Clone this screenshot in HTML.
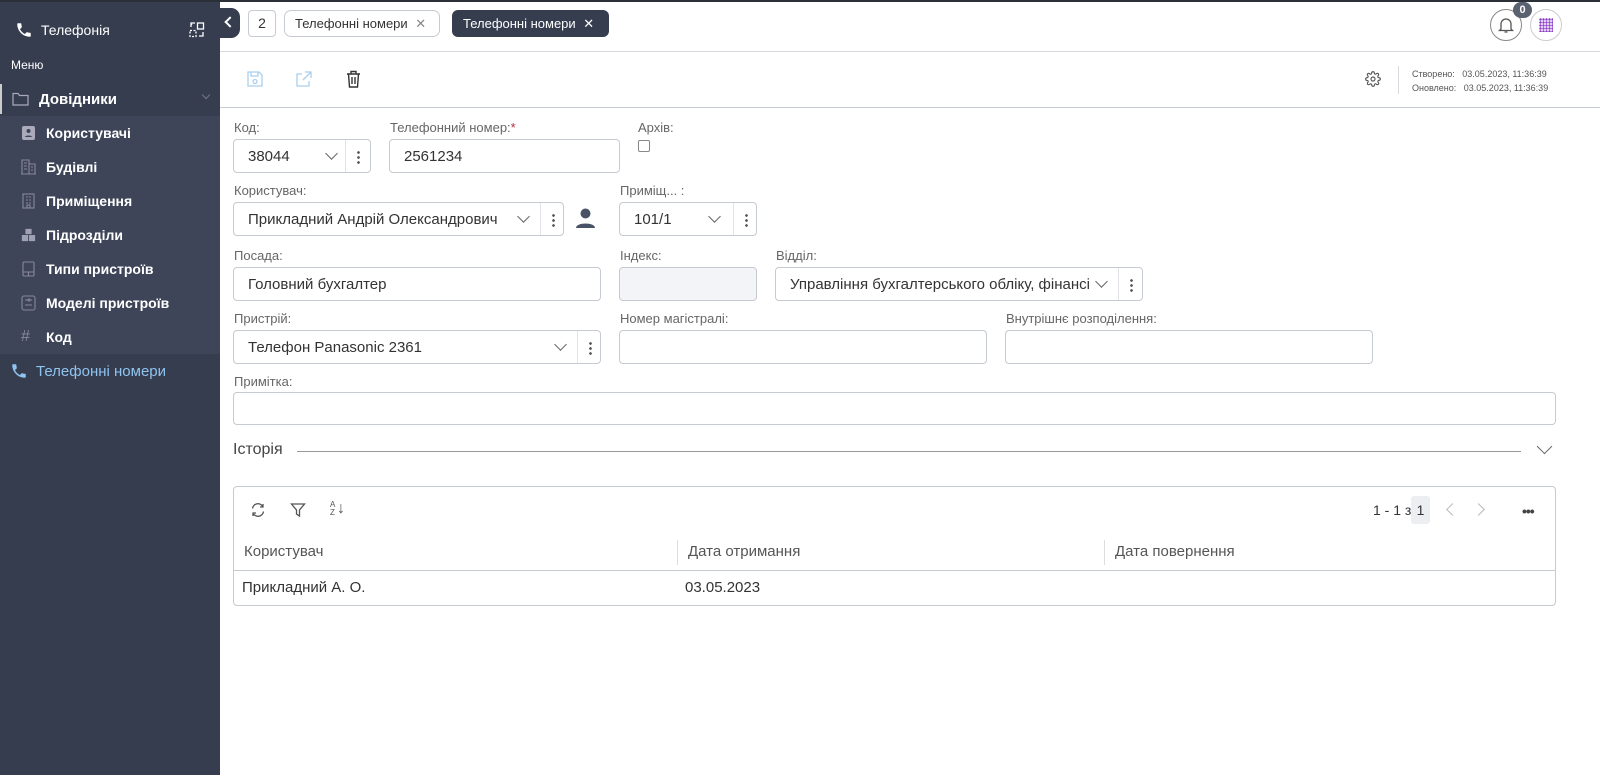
<!DOCTYPE html>
<html><head><meta charset="utf-8"><style>
*{box-sizing:border-box;margin:0;padding:0}
body{width:1600px;height:775px;overflow:hidden;background:#fff;font-family:"Liberation Sans",sans-serif;position:relative;color:#333}
.a{position:absolute}
#sb{left:0;top:0;width:220px;height:775px;background:#363d4f}
.topline{left:0;top:0;width:1600px;height:2px;background:#2b2f38}
.mi{position:absolute;left:0;width:220px;height:34px;color:#fff;font-size:14px;font-weight:bold;display:flex;align-items:center}
.mi svg{margin-left:21px;margin-right:10px}
.lbl{position:absolute;font-size:13px;color:#666}
.inp{position:absolute;border:1px solid #c6cad1;border-radius:4px;height:34px;font-size:15px;color:#333;display:flex;align-items:center;padding-left:14px;background:#fff;white-space:nowrap}
.dv{position:absolute;top:0;bottom:0;border-left:1px solid #e0e3e8;width:24px}
.dots{position:absolute;top:10px;left:11px;width:3px;height:14px;background:radial-gradient(circle,#555 1.2px,transparent 1.5px) 0 0/3px 5px repeat-y}
.chev{position:absolute;top:11px;width:9px;height:9px;border-right:1.3px solid #666;border-bottom:1.3px solid #666;transform:rotate(45deg)}
.th{position:absolute;top:543px;font-size:15px;color:#555}
</style></head><body>
<div class="a" id="sb"></div>
<div class="a topline"></div>
<svg class="a" style="left:15px;top:21px" width="18" height="18" viewBox="0 0 24 24"><path fill="#fff" d="M6.6 10.8c1.4 2.8 3.8 5.1 6.6 6.6l2.2-2.2c.3-.3.7-.4 1-.2 1.1.4 2.3.6 3.6.6.6 0 1 .4 1 1V20c0 .6-.4 1-1 1C10.6 21 3 13.4 3 4c0-.6.4-1 1-1h3.5c.6 0 1 .4 1 1 0 1.3.2 2.5.6 3.6.1.3 0 .7-.2 1L6.6 10.8z"/></svg>
<div class="a" style="left:41px;top:22px;color:#fff;font-size:14px">Телефонія</div>
<svg class="a" style="left:189px;top:22px" width="16" height="16" viewBox="0 0 16 16" fill="none" stroke="#fff" stroke-width="1.3"><rect x="8.5" y="1" width="6" height="6"/><path d="M1 8.5h6v6H1z" stroke-dasharray="2 1.5"/><path d="M6 1H2v4M3 3l-1-1M14 10v4h-4"/></svg>
<div class="a" style="left:11px;top:58px;color:#fff;font-size:12px">Меню</div>
<div class="mi" style="top:82px;font-weight:bold;font-size:15px;background:#363d4f"><svg style="margin-left:12px" width="17" height="14" viewBox="0 0 17 14" fill="none" stroke="#aab" stroke-width="1.2"><path d="M1 1.5h5l1.5 2H16v9.5H1z"/></svg>Довідники</div>
<div class="a chev" style="left:203px;top:92px;width:6px;height:6px;border-color:#778"></div>
<div class="a" style="left:0;top:84px;width:2px;height:30px;background:#ccc"></div>
<div class="a" style="left:0;top:116px;width:220px;height:238px;background:#3e4559"></div>
<div class="mi" style="top:116px"><svg width="15" height="16" viewBox="0 0 15 16"><rect x="1" y="1" width="13" height="14" rx="2" fill="#aab"/><circle cx="7.5" cy="6" r="2" fill="#3e4559"/><path d="M4 12c0-2 7-2 7 0z" fill="#3e4559"/></svg>Користувачі</div>
<div class="mi" style="top:150px"><svg width="15" height="16" viewBox="0 0 15 16" fill="none" stroke="#889" stroke-width="1.1"><path d="M1 15V1h7v14M8 5h6v10M3 4h3M3 7h3M3 10h3M10 8h2M10 11h2M0 15h15"/></svg>Будівлі</div>
<div class="mi" style="top:184px"><svg width="15" height="16" viewBox="0 0 15 16" fill="none" stroke="#889" stroke-width="1.1"><rect x="2" y="1" width="11" height="14"/><path d="M5 4h2M8 4h2M5 7h2M8 7h2M5 10h2M8 10h2M6 15v-3h3v3"/></svg>Приміщення</div>
<div class="mi" style="top:218px"><svg width="15" height="16" viewBox="0 0 17 16" fill="#aab"><path d="M5 1h7v6H5zM1 8h7v7H1zM9 8h7v7H9z" opacity=".9"/></svg>Підрозділи</div>
<div class="mi" style="top:252px"><svg width="15" height="16" viewBox="0 0 15 16" fill="none" stroke="#889" stroke-width="1.1"><rect x="2" y="1" width="11" height="14" rx="1"/><path d="M2 11h11M7.5 11v4"/></svg>Типи пристроїв</div>
<div class="mi" style="top:286px"><svg width="15" height="16" viewBox="0 0 15 16" fill="none" stroke="#889" stroke-width="1.1"><rect x="1" y="1" width="13" height="14" rx="2"/><path d="M4 5h3M4 10h7M9 5h2"/><circle cx="8" cy="5" r="1"/></svg>Моделі пристроїв</div>
<div class="mi" style="top:320px"><span style="margin-left:21px;margin-right:10px;color:#889;font-weight:normal;font-size:16px;width:15px">#</span>Код</div>
<div class="mi" style="top:354px;color:#8fc3f0;font-weight:normal;font-size:15px"><svg style="margin-left:10px;margin-right:8px" width="18" height="18" viewBox="0 0 24 24"><path fill="#8fc3f0" d="M6.6 10.8c1.4 2.8 3.8 5.1 6.6 6.6l2.2-2.2c.3-.3.7-.4 1-.2 1.1.4 2.3.6 3.6.6.6 0 1 .4 1 1V20c0 .6-.4 1-1 1C10.6 21 3 13.4 3 4c0-.6.4-1 1-1h3.5c.6 0 1 .4 1 1 0 1.3.2 2.5.6 3.6.1.3 0 .7-.2 1L6.6 10.8z"/></svg>Телефонні номери</div>

<div class="a" style="left:219px;top:8px;width:21px;height:30px;background:#363d4f;border-radius:0 9px 9px 0"></div>
<div class="a" style="left:226px;top:18px;width:8px;height:8px;border-left:2px solid #fff;border-bottom:2px solid #fff;transform:rotate(45deg)"></div>
<div class="a" style="left:248px;top:10px;width:28px;height:27px;border:1px solid #c6cad1;border-radius:4px;font-size:14px;text-align:center;line-height:25px">2</div>
<div class="a" style="left:284px;top:10px;width:156px;height:27px;border:1px solid #c6cad1;border-radius:7px;font-size:13px;line-height:25px;padding-left:10px;white-space:nowrap">Телефонні номери <span style="color:#888;margin-left:4px">✕</span></div>
<div class="a" style="left:452px;top:10px;width:157px;height:27px;background:#363d4f;border-radius:6px;font-size:13px;line-height:27px;padding-left:11px;color:#fff;white-space:nowrap">Телефонні номери <span style="margin-left:4px">✕</span></div>
<div class="a" style="left:1490px;top:9px;width:32px;height:32px;border:1px solid #888;border-radius:50%"></div>
<svg class="a" style="left:1497px;top:16px" width="18" height="18" viewBox="0 0 18 18" fill="none" stroke="#555" stroke-width="1.3"><path d="M4 13V8a5 5 0 0 1 10 0v5l1.5 1.5h-13zM7.5 16h3"/></svg>
<div class="a" style="left:1513px;top:2px;width:19px;height:16px;border-radius:8px;background:#5a6272;color:#fff;font-size:11px;text-align:center;line-height:16px;font-weight:bold">0</div>
<div class="a" style="left:1530px;top:9px;width:32px;height:32px;border:1px solid #ccc;border-radius:50%;background:#fff"></div>
<div class="a" style="left:1539px;top:18px;width:14px;height:14px;background:radial-gradient(circle,#8a3bc6 1.1px,transparent 1.4px) 0 0/3px 3px"></div>
<div class="a" style="left:220px;top:51px;width:1380px;height:1px;background:#d6d9de"></div>

<svg class="a" style="left:247px;top:71px" width="16" height="16" viewBox="0 0 16 16" fill="none" stroke="#a9cfee" stroke-width="1.3"><path d="M2 1h10l3 3v11H1V1zM4 1v4h7V1"/><circle cx="8" cy="10.5" r="2"/></svg>
<svg class="a" style="left:295px;top:71px" width="17" height="17" viewBox="0 0 17 17" fill="none" stroke="#a9cfee" stroke-width="1.3"><path d="M7 3H2v12h12v-5M10 1h6v6M16 1L8 9"/></svg>
<svg class="a" style="left:346px;top:70px" width="15" height="18" viewBox="0 0 15 18" fill="none" stroke="#333" stroke-width="1.4"><path d="M1 4h13M5 4V1.5h5V4M2.5 4l1 13h8l1-13M6 7v7M9 7v7"/></svg>
<svg class="a" style="left:1365px;top:71px" width="16" height="16" viewBox="0 0 24 24" fill="none" stroke="#555" stroke-width="1.7"><circle cx="12" cy="12" r="3"/><path d="M19.4 15a1.7 1.7 0 0 0 .3 1.8l.1.1a2 2 0 1 1-2.8 2.8l-.1-.1a1.7 1.7 0 0 0-1.8-.3 1.7 1.7 0 0 0-1 1.5V21a2 2 0 1 1-4 0v-.1a1.7 1.7 0 0 0-1.1-1.5 1.7 1.7 0 0 0-1.8.3l-.1.1a2 2 0 1 1-2.8-2.8l.1-.1a1.7 1.7 0 0 0 .3-1.8 1.7 1.7 0 0 0-1.5-1H3a2 2 0 1 1 0-4h.1a1.7 1.7 0 0 0 1.5-1.1 1.7 1.7 0 0 0-.3-1.8l-.1-.1a2 2 0 1 1 2.8-2.8l.1.1a1.7 1.7 0 0 0 1.8.3H9a1.7 1.7 0 0 0 1-1.5V3a2 2 0 1 1 4 0v.1a1.7 1.7 0 0 0 1 1.5 1.7 1.7 0 0 0 1.8-.3l.1-.1a2 2 0 1 1 2.8 2.8l-.1.1a1.7 1.7 0 0 0-.3 1.8V9a1.7 1.7 0 0 0 1.5 1H21a2 2 0 1 1 0 4h-.1a1.7 1.7 0 0 0-1.5 1z"/></svg>
<div class="a" style="left:1398px;top:66px;width:1px;height:28px;background:#d6d9de"></div>
<div class="a" style="left:1412px;top:67px;font-size:9px;color:#555;line-height:14px">Створено:&nbsp;&nbsp;&nbsp;03.05.2023, 11:36:39<br>Оновлено:&nbsp;&nbsp;&nbsp;03.05.2023, 11:36:39</div>
<div class="a" style="left:220px;top:107px;width:1380px;height:1px;background:#c6cad1"></div>

<div class="lbl" style="left:234px;top:120px">Код:</div>
<div class="inp" style="left:233px;top:139px;width:138px">38044<div class="chev" style="left:93px;top:9px"></div><div class="dv" style="left:111px"><div class="dots"></div></div></div>
<div class="lbl" style="left:390px;top:120px">Телефонний номер:<span style="color:#b03040">*</span></div>
<div class="inp" style="left:389px;top:139px;width:231px">2561234</div>
<div class="lbl" style="left:638px;top:120px">Архів:</div>
<div class="a" style="left:638px;top:140px;width:12px;height:12px;border:1px solid #888;border-radius:2px"></div>

<div class="lbl" style="left:234px;top:183px">Користувач:</div>
<div class="inp" style="left:233px;top:202px;width:331px">Прикладний Андрій Олександрович<div class="chev" style="left:285px;top:9px"></div><div class="dv" style="left:306px"><div class="dots"></div></div></div>
<svg class="a" style="left:576px;top:208px" width="19" height="20" viewBox="0 0 19 20" fill="#4a5366"><circle cx="9.5" cy="5.5" r="5"/><path d="M0 20c0-6 19-6 19 0z"/></svg>
<div class="lbl" style="left:620px;top:183px">Приміщ... :</div>
<div class="inp" style="left:619px;top:202px;width:138px">101/1<div class="chev" style="left:90px;top:9px"></div><div class="dv" style="left:113px"><div class="dots"></div></div></div>

<div class="lbl" style="left:234px;top:248px">Посада:</div>
<div class="inp" style="left:233px;top:267px;width:368px">Головний бухгалтер</div>
<div class="lbl" style="left:620px;top:248px">Індекс:</div>
<div class="inp" style="left:619px;top:267px;width:138px;background:#f3f4f7"></div>
<div class="lbl" style="left:776px;top:248px">Відділ:</div>
<div class="inp" style="left:775px;top:267px;width:368px">Управління бухгалтерського обліку, фінансі<div class="chev" style="left:321px;top:9px"></div><div class="dv" style="left:342px"><div class="dots"></div></div></div>

<div class="lbl" style="left:234px;top:311px">Пристрій:</div>
<div class="inp" style="left:233px;top:330px;width:368px">Телефон Panasonic 2361<div class="chev" style="left:322px;top:9px"></div><div class="dv" style="left:343px"><div class="dots"></div></div></div>
<div class="lbl" style="left:620px;top:311px">Номер магістралі:</div>
<div class="inp" style="left:619px;top:330px;width:368px"></div>
<div class="lbl" style="left:1006px;top:311px">Внутрішнє розподілення:</div>
<div class="inp" style="left:1005px;top:330px;width:368px"></div>

<div class="lbl" style="left:234px;top:374px">Примітка:</div>
<div class="inp" style="left:233px;top:392px;width:1323px;height:33px"></div>

<div class="a" style="left:233px;top:441px;font-size:16px;color:#444">Історія</div>
<div class="a" style="left:297px;top:451px;width:1224px;height:1px;background:#999"></div>
<div class="a" style="left:1539px;top:441px;width:11px;height:11px;border-right:1.4px solid #666;border-bottom:1.4px solid #666;transform:rotate(45deg)"></div>

<div class="a" style="left:233px;top:486px;width:1323px;height:120px;border:1px solid #c6cad1;border-radius:4px"></div>
<svg class="a" style="left:250px;top:502px" width="16" height="16" viewBox="0 0 16 16" fill="none" stroke="#555" stroke-width="1.3"><path d="M2.5 6.5A5.5 5.5 0 0 1 13 5M13.5 9.5A5.5 5.5 0 0 1 3 11M13 2v3h-3M3 14v-3h3"/></svg>
<svg class="a" style="left:290px;top:502px" width="16" height="16" viewBox="0 0 16 16" fill="none" stroke="#555" stroke-width="1.3"><path d="M1.5 2h13l-5 6v6l-3-2V8z"/></svg>
<div class="a" style="left:330px;top:501px;font-size:8px;line-height:8px;color:#555">A<br>Z</div>
<div class="a" style="left:337px;top:500px;font-size:16px;color:#555">↓</div>
<div class="a" style="left:1373px;top:502px;font-size:14px;color:#333">1 - 1 з</div>
<div class="a" style="left:1411px;top:496px;width:19px;height:28px;background:#eceef1;border-radius:3px;font-size:14px;text-align:center;line-height:28px">1</div>
<div class="a" style="left:1448px;top:505px;width:9px;height:9px;border-left:1.3px solid #bbb;border-bottom:1.3px solid #bbb;transform:rotate(45deg)"></div>
<div class="a" style="left:1474px;top:505px;width:9px;height:9px;border-right:1.3px solid #bbb;border-top:1.3px solid #bbb;transform:rotate(45deg)"></div>
<div class="a" style="left:1522px;top:503px;font-size:14px;color:#444;letter-spacing:-1px;font-weight:bold">•••</div>
<div class="th" style="left:244px">Користувач</div>
<div class="a" style="left:677px;top:540px;width:1px;height:25px;background:#ddd"></div>
<div class="th" style="left:688px">Дата отримання</div>
<div class="a" style="left:1104px;top:540px;width:1px;height:25px;background:#ddd"></div>
<div class="th" style="left:1115px">Дата повернення</div>
<div class="a" style="left:234px;top:570px;width:1321px;height:1px;background:#c6cad1"></div>
<div class="a" style="left:242px;top:579px;font-size:15px;color:#333">Прикладний А. О.</div>
<div class="a" style="left:685px;top:579px;font-size:15px;color:#333">03.05.2023</div>
</body></html>
